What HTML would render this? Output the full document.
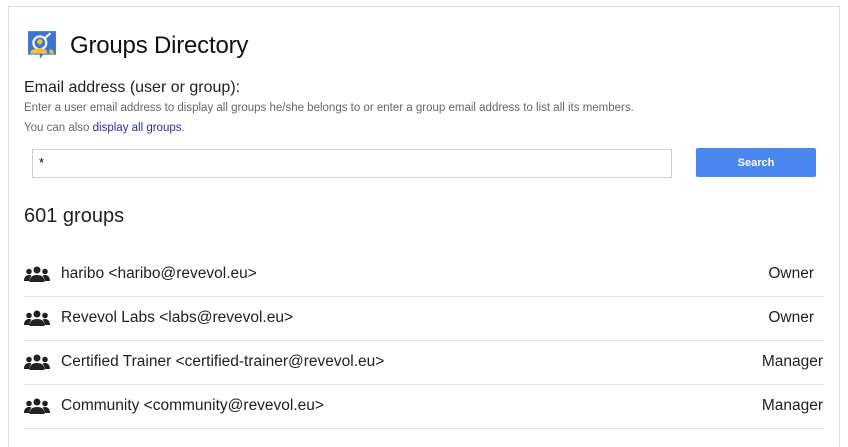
<!DOCTYPE html>
<html><head><style>
body{margin:0;width:848px;height:429px;overflow:hidden;background:#fff;font-family:"Liberation Sans",sans-serif;color:#212121}
.frame{position:absolute;left:8px;top:6px;width:830px;height:440px;border:1px solid #dcdcdc;border-bottom:none}
.a{position:absolute;white-space:nowrap}
.line{position:absolute;left:24px;width:800px;height:1px;background:#e4e4e4}
.row{position:absolute;left:24px;width:800px;font-size:15.5px}
.row .n{position:absolute;left:37px;top:0}
.row .r{position:absolute;right:0;top:0}
.row svg{position:absolute;left:0;top:1px}
</style></head><body>
<div class="frame"></div>
<svg class="a" style="left:27px;top:30px" width="30" height="30" viewBox="0 0 28 28">
<path d="M1 1h26v22h-12l-3 4v-4H1z" fill="#3b73d9"/>
<circle cx="12" cy="12" r="6" fill="none" stroke="#fff" stroke-width="2"/>
<line x1="16" y1="8" x2="22" y2="3" stroke="#fff" stroke-width="2"/>
<circle cx="12" cy="11" r="2.5" fill="#f2c12e"/>
<path d="M5 22c0-4 3-5 7-5s7 1 7 5z" fill="#f2c12e"/>
<path d="M3 22c0-3 2-4 4-4v4zM21 18c2 0 4 1 4 4h-4z" fill="#f2c12e"/>
</svg>
<div class="a" style="left:70px;top:32px;font-size:24px;color:#111;letter-spacing:-0.2px">Groups Directory</div>
<div class="a" style="left:24px;top:79px;font-size:16px;color:#222">Email address (user or group):</div>
<div class="a" style="left:24px;top:102px;font-size:11.5px;color:#666">Enter a user email address to display all groups he/she belongs to or enter a group email address to list all its members.</div>
<div class="a" style="left:24px;top:122px;font-size:11.5px;color:#666">You can also <span style="color:#2a2ab0">display all groups</span>.</div>
<div class="a" style="left:32px;top:149px;width:638px;height:27px;border:1px solid #d0d0d0"><span style="position:absolute;left:6px;top:5px;font-size:13px;color:#000">*</span></div>
<div class="a" style="left:696px;top:148px;width:120px;height:29px;background:#4a86f0;border-radius:2px;color:#fff;font-weight:bold;font-size:11px;text-align:center;line-height:30px">Search</div>
<div class="a" style="left:24px;top:205px;font-size:20px;color:#222">601 groups</div>

<div class="row" style="top:265px"><svg width="26" height="16" viewBox="0 0 26 16"><circle cx="13" cy="4" r="3.5" fill="#222"/><circle cx="5" cy="5.5" r="2.8" fill="#222"/><circle cx="21" cy="5.5" r="2.8" fill="#222"/><path d="M5.5 16c0-5 3-7 7.5-7s7.5 2 7.5 7z" fill="#222"/><path d="M0 15c0-4 2-6 5-6 1 0 2 .3 2.5.7C6 11 5.5 13 5.5 15zM26 15c0-4-2-6-5-6-1 0-2 .3-2.5.7C20 11 20.5 13 20.5 15z" fill="#222"/></svg><span class="n">haribo &lt;haribo@revevol.eu&gt;</span><span class="r" style="right:10px">Owner</span></div>
<div class="line" style="top:296px"></div>
<div class="row" style="top:309px"><svg width="26" height="16" viewBox="0 0 26 16"><circle cx="13" cy="4" r="3.5" fill="#222"/><circle cx="5" cy="5.5" r="2.8" fill="#222"/><circle cx="21" cy="5.5" r="2.8" fill="#222"/><path d="M5.5 16c0-5 3-7 7.5-7s7.5 2 7.5 7z" fill="#222"/><path d="M0 15c0-4 2-6 5-6 1 0 2 .3 2.5.7C6 11 5.5 13 5.5 15zM26 15c0-4-2-6-5-6-1 0-2 .3-2.5.7C20 11 20.5 13 20.5 15z" fill="#222"/></svg><span class="n">Revevol Labs &lt;labs@revevol.eu&gt;</span><span class="r" style="right:10px">Owner</span></div>
<div class="line" style="top:340px"></div>
<div class="row" style="top:353px"><svg width="26" height="16" viewBox="0 0 26 16"><circle cx="13" cy="4" r="3.5" fill="#222"/><circle cx="5" cy="5.5" r="2.8" fill="#222"/><circle cx="21" cy="5.5" r="2.8" fill="#222"/><path d="M5.5 16c0-5 3-7 7.5-7s7.5 2 7.5 7z" fill="#222"/><path d="M0 15c0-4 2-6 5-6 1 0 2 .3 2.5.7C6 11 5.5 13 5.5 15zM26 15c0-4-2-6-5-6-1 0-2 .3-2.5.7C20 11 20.5 13 20.5 15z" fill="#222"/></svg><span class="n">Certified Trainer &lt;certified-trainer@revevol.eu&gt;</span><span class="r" style="right:1px">Manager</span></div>
<div class="line" style="top:384px"></div>
<div class="row" style="top:397px"><svg width="26" height="16" viewBox="0 0 26 16"><circle cx="13" cy="4" r="3.5" fill="#222"/><circle cx="5" cy="5.5" r="2.8" fill="#222"/><circle cx="21" cy="5.5" r="2.8" fill="#222"/><path d="M5.5 16c0-5 3-7 7.5-7s7.5 2 7.5 7z" fill="#222"/><path d="M0 15c0-4 2-6 5-6 1 0 2 .3 2.5.7C6 11 5.5 13 5.5 15zM26 15c0-4-2-6-5-6-1 0-2 .3-2.5.7C20 11 20.5 13 20.5 15z" fill="#222"/></svg><span class="n">Community &lt;community@revevol.eu&gt;</span><span class="r" style="right:1px">Manager</span></div>
<div class="line" style="top:428px"></div>
</body></html>
